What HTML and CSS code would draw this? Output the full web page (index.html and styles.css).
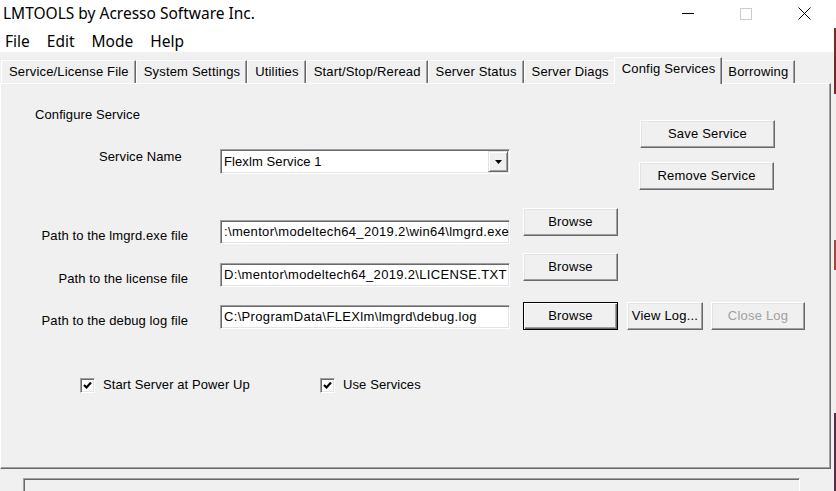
FILE: index.html
```html
<!DOCTYPE html>
<html>
<head>
<meta charset="utf-8">
<title>LMTOOLS by Acresso Software Inc.</title>
<link rel="stylesheet" href="styles.css">
</head>
<body>
<header class="titlebar">
  <div class="title">LMTOOLS by Acresso Software Inc.</div>
  <div class="controls">
    <div class="ctl"><svg width="12" height="12" viewBox="0 0 12 12"><path d="M0 5.5H12" stroke="#000" stroke-width="1"/></svg></div>
    <div class="ctl"><svg width="12" height="12" viewBox="0 0 12 12"><rect x="0.5" y="0.5" width="11" height="11" fill="none" stroke="#cccccc"/></svg></div>
    <div class="ctl"><svg width="13" height="13" viewBox="0 0 13 13"><path d="M0.5 0.5L12.5 12.5M12.5 0.5L0.5 12.5" stroke="#000" stroke-width="1"/></svg></div>
  </div>
</header>
<div class="main">
  <div class="window">
    <nav class="menubar">
      <span class="menu-item">File</span>
      <span class="menu-item">Edit</span>
      <span class="menu-item">Mode</span>
      <span class="menu-item">Help</span>
    </nav>
    <div class="tabs">
      <div class="tab">Service/License File</div>
      <div class="tab">System Settings</div>
      <div class="tab">Utilities</div>
      <div class="tab">Start/Stop/Reread</div>
      <div class="tab">Server Status</div>
      <div class="tab">Server Diags</div>
      <div class="tab active">Config Services</div>
      <div class="tab">Borrowing</div>
    </div>
    <section class="panel">
      <div class="top">
        <div class="top-left">
          <div class="config-head">Configure Service</div>
          <div class="svc-row">
            <div class="svc-label">Service Name</div>
            <div class="combo">
              <div class="combo-text">Flexlm Service 1</div>
              <div class="combo-btn"><svg width="7" height="4" viewBox="0 0 7 4"><path d="M0 0H7L3.5 4Z" fill="#000"/></svg></div>
            </div>
          </div>
        </div>
        <div class="top-right">
          <button class="btn btn-save">Save Service</button>
          <button class="btn btn-remove">Remove Service</button>
        </div>
      </div>

      <div class="path-row row-exe">
        <div class="path-label">Path to the lmgrd.exe file</div>
        <div class="field">:\mentor\modeltech64_2019.2\win64\lmgrd.exe</div>
        <button class="btn btn-browse">Browse</button>
      </div>
      <div class="path-row row-lic">
        <div class="path-label">Path to the license file</div>
        <div class="field">D:\mentor\modeltech64_2019.2\LICENSE.TXT</div>
        <button class="btn btn-browse">Browse</button>
      </div>
      <div class="path-row row-log">
        <div class="path-label">Path to the debug log file</div>
        <div class="field">C:\ProgramData\FLEXlm\lmgrd\debug.log</div>
        <button class="btn btn-browse btn-default">Browse</button>
        <button class="btn btn-view">View Log...</button>
        <button class="btn btn-close" disabled>Close Log</button>
      </div>

      <div class="checks">
        <label class="check-item first">
          <span class="cb"><svg width="9" height="9" viewBox="0 0 9 9"><path d="M1 4L3.5 6.5L8 1.5" fill="none" stroke="#000" stroke-width="2.2"/></svg></span>
          <span>Start Server at Power Up</span>
        </label>
        <label class="check-item">
          <span class="cb"><svg width="9" height="9" viewBox="0 0 9 9"><path d="M1 4L3.5 6.5L8 1.5" fill="none" stroke="#000" stroke-width="2.2"/></svg></span>
          <span>Use Services</span>
        </label>
      </div>
    </section>
    <div class="status-area">
      <div class="status"></div>
    </div>
  </div>
  <div class="edge"></div>
</div>
</body>
</html>
```

FILE: styles.css
```css
* { box-sizing: border-box; }
html, body { margin: 0; padding: 0; }
body {
  width: 836px;
  height: 491px;
  overflow: hidden;
  background: #f0f0f0;
  font-family: "Liberation Sans", Arial, sans-serif;
  font-size: 13px;
  letter-spacing: 0.1px;
  color: #000;
}

/* title bar */
.titlebar {
  display: flex;
  height: 28px;
  background: #fff;
}
.title {
  flex: 1;
  font-family: "Noto Sans", sans-serif;
  font-size: 15.5px;
  letter-spacing: 0;
  line-height: 27px;
  padding-left: 3px;
  white-space: nowrap;
}
.controls {
  display: flex;
  margin-right: 3px;
}
.ctl {
  width: 58px;
  display: flex;
  align-items: center;
  justify-content: center;
  padding-bottom: 1px;
}

.main {
  display: flex;
  height: 463px;
}
.window {
  width: 834px;
  background: #f0f0f0;
}
.edge {
  width: 2px;
  background: linear-gradient(to bottom, #7a2a22 0, #7a2a22 66px, #f3eeee 66px, #f3eeee 212px, #a8463a 212px, #a8463a 242px, #f3eeee 242px, #f3eeee 385px, #5e2a44 385px);
}

/* menu */
.menubar {
  display: flex;
  height: 24px;
  background: #fff;
  padding: 2px 0 0 5px;
  gap: 17px;
  font-family: "Noto Sans", sans-serif;
  font-size: 15.5px;
  letter-spacing: 0;
  line-height: 22px;
}

/* tabs */
.tabs {
  display: flex;
  align-items: flex-end;
  height: 31px;
  padding-left: 1px;
  letter-spacing: 0.17px;
}
.tab {
  height: 23px;
  line-height: 21px;
  padding: 0 6px 0 7px;
  border-top: 1px solid #fff;
  border-left: 1px solid #fff;
  border-right: 1px solid #696969;
  box-shadow: inset -1px 0 #a0a0a0;
  white-space: nowrap;
  background: #f0f0f0;
}
.tab.active {
  height: 27px;
  line-height: 22px;
  margin: 0 -2px -1px -2px;
  position: relative;
  z-index: 1;
}

/* panel */
.panel {
  width: 831px;
  height: 386px;
  border-top: 1px solid #fff;
  border-left: 1px solid #fff;
  border-right: 1px solid #696969;
  border-bottom: 1px solid #696969;
  box-shadow: inset -1px -1px #a0a0a0;
  line-height: 16px;
}

.top {
  display: flex;
}
.top-left {
  width: 638px;
  flex: none;
}
.config-head {
  margin: 23px 0 0 34px;
}
.svc-row {
  display: flex;
  margin-top: 26px;
  padding-left: 98px;
}
.svc-label {
  width: 121px;
}
.combo {
  display: flex;
  width: 290px;
  height: 25px;
  padding: 1px;
  background: #fff;
  border: 1px solid;
  border-color: #a0a0a0 #fff #fff #a0a0a0;
  box-shadow: inset 1px 1px #696969, inset -1px -1px #e3e3e3;
}
.combo-text {
  flex: 1;
  padding-left: 2px;
  line-height: 21px;
}
.combo-btn {
  width: 20px;
  height: 100%;
  display: flex;
  align-items: center;
  justify-content: center;
  background: #f0f0f0;
  border: 1px solid;
  border-color: #e3e3e3 #696969 #696969 #e3e3e3;
  box-shadow: inset 1px 1px #fff, inset -1px -1px #a0a0a0;
}

.top-right {
  display: flex;
  flex-direction: column;
  align-items: flex-start;
  margin-top: 36px;
  gap: 14px;
}

.btn {
  height: 28px;
  padding: 0;
  margin: 0;
  background: #f0f0f0;
  border: 1px solid;
  border-color: #fff #696969 #696969 #fff;
  box-shadow: inset -1px -1px #a0a0a0, inset 1px 1px #e3e3e3;
  font-family: "Liberation Sans", Arial, sans-serif;
  font-size: 13px;
  letter-spacing: 0.2px;
  color: #000;
  text-align: center;
  line-height: 16px;
}
.btn-save {
  width: 135px;
  margin-left: 1px;
}
.btn-remove {
  width: 135px;
}
.btn-browse {
  width: 95px;
  margin-left: 13px;
}
.btn-default {
  border-color: #000;
  box-shadow: inset 1px 1px #fff, inset -1px -1px #696969, inset -2px -2px #a0a0a0;
}
.btn-view {
  width: 76px;
  margin-left: 9px;
}
.btn-close {
  width: 94px;
  margin-left: 8px;
  color: #a0a0a0;
}

/* path rows */
.path-row {
  display: flex;
  align-items: flex-start;
}
.path-label {
  width: 187px;
  text-align: right;
  white-space: nowrap;
}
.field {
  width: 290px;
  height: 24px;
  margin-left: 32px;
  padding-left: 3px;
  background: #fff;
  border: 1px solid;
  border-color: #a0a0a0 #fff #fff #a0a0a0;
  box-shadow: inset 1px 1px #696969, inset -1px -1px #e3e3e3;
  line-height: 22px;
  letter-spacing: 0.33px;
  white-space: nowrap;
  overflow: hidden;
}
.row-exe { margin-top: 18px; }
.row-exe .path-label { margin-top: 20px; }
.row-exe .field { margin-top: 12px; }

.row-lic { margin-top: 9px; }
.row-lic .path-label { margin-top: 18px; }
.row-lic .field { margin-top: 10px; }

.row-log { margin-top: 15px; }
.row-log .path-label { margin-top: 11px; }
.row-log .field { margin-top: 3px; }

/* checkboxes */
.checks {
  display: flex;
  margin-top: 47px;
  padding-left: 79px;
}
.check-item {
  display: flex;
  align-items: center;
  gap: 8px;
}
.check-item.first {
  width: 240px;
}
.cb {
  width: 15px;
  height: 15px;
  background: #fff;
  border: 1px solid;
  border-color: #a0a0a0 #fff #fff #a0a0a0;
  box-shadow: inset 1px 1px #696969, inset -1px -1px #e3e3e3;
  display: flex;
  align-items: center;
  justify-content: center;
}

/* status */
.status-area {
  padding: 9px 0 0 23px;
}
.status {
  width: 777px;
  height: 20px;
  border-top: 1px solid #a0a0a0;
  border-left: 1px solid #a0a0a0;
  border-right: 1px solid #fff;
  box-shadow: inset 1px 1px #696969;
}
```
